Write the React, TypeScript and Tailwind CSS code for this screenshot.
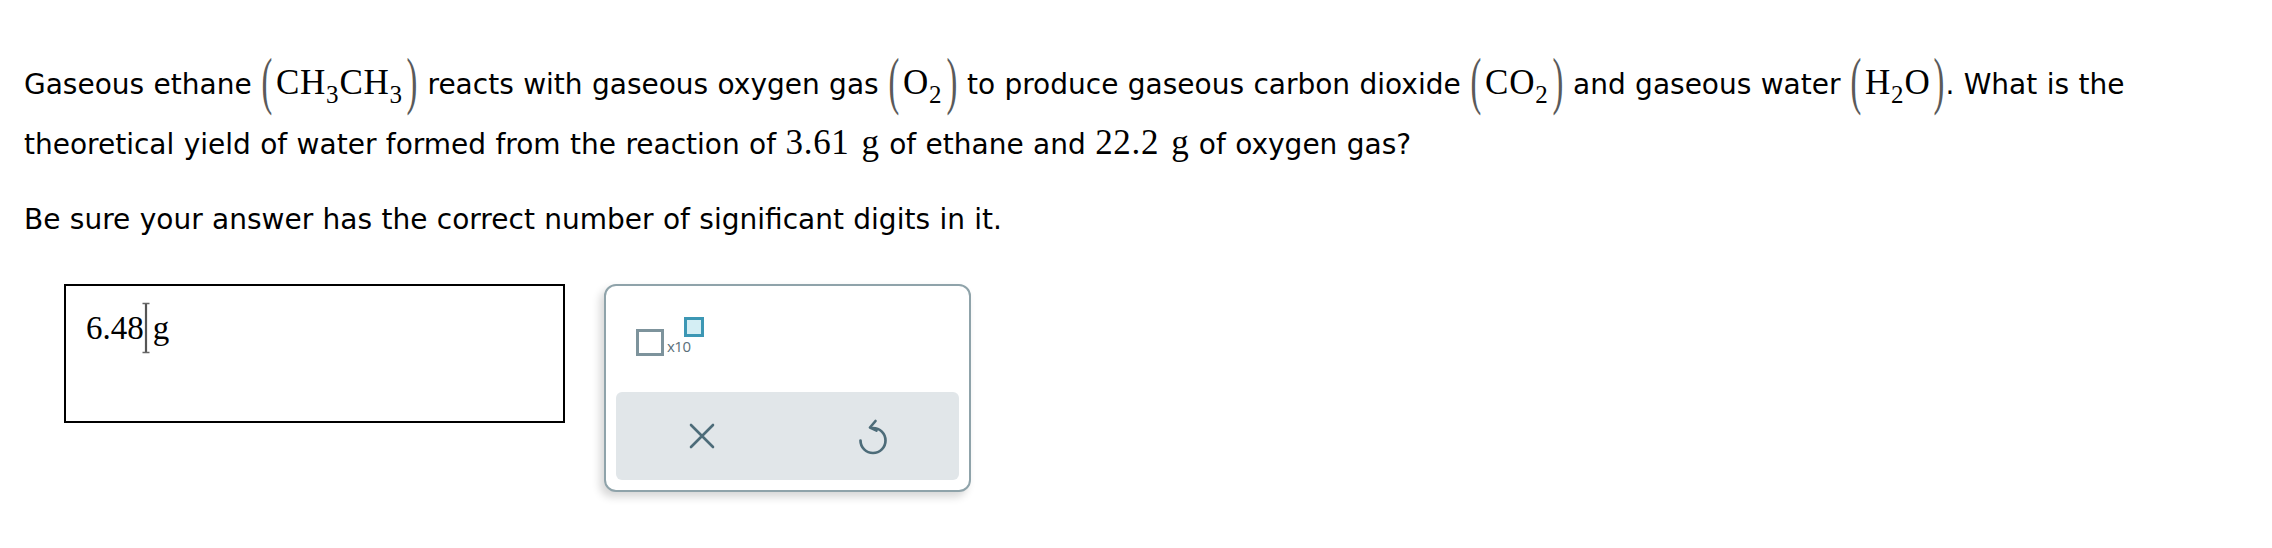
import React from "react";

const SANS = "font-['DejaVu_Sans','Verdana',sans-serif]";
const SERIF = "font-['Liberation_Serif','Times_New_Roman',serif]";

function Paren({ ch }: { ch: string }) {
  return (
    <span
      className={`${SERIF} inline-block text-[36px] leading-none text-[#5a5a5a] origin-center scale-y-[1.75] scale-x-[0.9] align-[1px]`}
    >
      {ch}
    </span>
  );
}

function Sub({ children }: { children: React.ReactNode }) {
  return (
    <span className="text-[25px] leading-none align-[-9px] mr-[1px] tracking-normal">{children}</span>
  );
}

function Math({ children }: { children: React.ReactNode }) {
  return (
    <span className={`${SERIF} text-[35px] leading-none tracking-[0.02em] text-black [word-spacing:0]`}>
      {children}
    </span>
  );
}

function Chem({ children }: { children: React.ReactNode }) {
  return (
    <span className="whitespace-nowrap">
      <Paren ch="(" />
      <span className="mx-[3px]">
        <Math>{children}</Math>
      </span>
      <Paren ch=")" />
    </span>
  );
}

function IBeam() {
  return (
    <svg
      className="absolute left-[75px] top-[16px]"
      width="10"
      height="52"
      viewBox="0 0 10 52"
    >
      <path d="M5 2 L5 50" stroke="#555" strokeWidth="2.2" />
      <path d="M1.5 1.5 L8.5 1.5 M1.5 50.5 L8.5 50.5" stroke="#666" strokeWidth="1.6" />
    </svg>
  );
}

function XIcon() {
  return (
    <svg width="26" height="26" viewBox="0 0 26 26" fill="none">
      <path
        d="M2 2 L24 24 M24 2 L2 24"
        stroke="#4d6c79"
        strokeWidth="2.6"
        strokeLinecap="round"
      />
    </svg>
  );
}

function UndoIcon() {
  return (
    <svg width="34" height="38" viewBox="0 0 34 38" fill="none">
      <path
        d="M17 10 A12.5 12.5 0 1 1 4.5 22.5"
        stroke="#4d6c79"
        strokeWidth="2.7"
        strokeLinecap="round"
      />
      <path
        d="M19.5 3 L14 9.5 L20.5 12.5"
        stroke="#4d6c79"
        strokeWidth="2.7"
        strokeLinecap="round"
        strokeLinejoin="round"
      />
    </svg>
  );
}

export default function App() {
  return (
    <div className={`${SANS} w-[2272px] h-[548px] bg-white text-black overflow-hidden`}>
      <div className="pl-[24px] pt-[55px]">
        <div className="text-[28px] leading-[60px] whitespace-nowrap [word-spacing:0.5px]">
          <div>
            Gaseous ethane{" "}
            <Chem>
              CH<Sub>3</Sub>CH<Sub>3</Sub>
            </Chem>{" "}
            reacts with gaseous oxygen gas{" "}
            <Chem>
              O<Sub>2</Sub>
            </Chem>{" "}
            to produce gaseous carbon dioxide{" "}
            <Chem>
              CO<Sub>2</Sub>
            </Chem>{" "}
            and gaseous water{" "}
            <Chem>
              H<Sub>2</Sub>O
            </Chem>
            . What is the
          </div>
          <div>
            theoretical yield of water formed from the reaction of{" "}
            <Math>
              3.61<span className="ml-[12px]">g</span>
            </Math>{" "}
            of ethane and{" "}
            <Math>
              22.2<span className="ml-[12px]">g</span>
            </Math>{" "}
            of oxygen gas?
          </div>
        </div>
        <div className="mt-[15px] text-[28px] leading-[60px] [word-spacing:0.5px]">
          Be sure your answer has the correct number of significant digits in it.
        </div>

        <div className="mt-[34px] ml-[40px] flex items-start gap-[39px]">
          <div className="relative w-[501px] h-[139px] border-2 border-black pl-[20px] pt-[27px]">
            <div className={`${SERIF} text-[33px] leading-[30px] text-black`}>
              6.48<span className="ml-[9px]">g</span>
            </div>
            <IBeam />
          </div>

          <div className="w-[367px] h-[208px] border-2 border-[#8fa3aa] rounded-[12px] p-[10px] bg-white shadow-[-4px_5px_9px_rgba(0,0,0,0.16)] flex flex-col">
            <div className="h-[97px]">
              <div className="relative ml-[20px] mt-[21px] w-[90px] h-[40px]">
                <div className="absolute left-0 top-[12px] w-[28px] h-[27px] border-[3px] border-[#7d939c]" />
                <span className="absolute left-[31px] top-[20px] font-['Open_Sans',sans-serif] text-[15px] leading-[18px] text-[#5a6f79] tracking-[-0.5px]">
                  x10
                </span>
                <div className="absolute left-[48px] top-0 w-[20px] h-[20px] border-[3px] border-[#3c97b4] bg-[#d4eef4]" />
              </div>
            </div>
            <div className="h-[88px] rounded-[6px] bg-[#e1e6e9] grid grid-cols-2">
              <div className="flex items-center justify-center">
                <XIcon />
              </div>
              <div className="flex items-center justify-center pt-[2px]">
                <UndoIcon />
              </div>
            </div>
          </div>
        </div>
      </div>
    </div>
  );
}
